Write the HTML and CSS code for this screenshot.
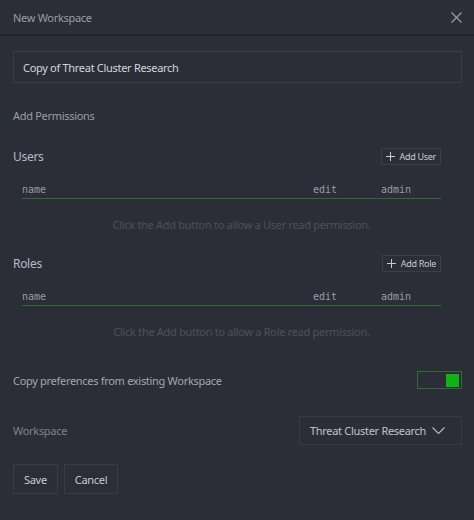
FILE: index.html
```html
<!DOCTYPE html>
<html lang="en">
<head>
  <meta charset="UTF-8" />
  <meta name="viewport" content="width=device-width, initial-scale=1.0" />
  <title>New Workspace</title>
  <link rel="stylesheet" href="styles.css">
</head>
<body>
  <div class="dialog">
    <div class="dialog-header">
      <span class="dialog-title">New Workspace</span>
      <svg class="close" width="11" height="11" viewBox="0 0 11 11">
        <path d="M0.5 0.5 L10.5 10.5 M10.5 0.5 L0.5 10.5" stroke="#9a9ca4" stroke-width="1.2" fill="none" />
      </svg>
    </div>

    <div class="dialog-body">
      <input class="name-input" type="text" value="Copy of Threat Cluster Research" />

      <p class="section-label">Add Permissions</p>

      <div class="perm-head">
        <span class="perm-title">Users</span>
        <button class="add-btn">
          <svg width="9" height="9" viewBox="0 0 9 9"><path d="M4.5 0 V9 M0 4.5 H9" stroke="#c8cad0" stroke-width="1" fill="none" /></svg>
          Add User
        </button>
      </div>
      <div class="perm-cols">
        <span class="col-name">name</span>
        <span class="col-edit">edit</span>
        <span class="col-admin">admin</span>
      </div>
      <p class="empty">Click the Add button to allow a User read permission.</p>

      <div class="perm-head roles">
        <span class="perm-title">Roles</span>
        <button class="add-btn">
          <svg width="9" height="9" viewBox="0 0 9 9"><path d="M4.5 0 V9 M0 4.5 H9" stroke="#c8cad0" stroke-width="1" fill="none" /></svg>
          Add Role
        </button>
      </div>
      <div class="perm-cols">
        <span class="col-name">name</span>
        <span class="col-edit">edit</span>
        <span class="col-admin">admin</span>
      </div>
      <p class="empty">Click the Add button to allow a Role read permission.</p>

      <div class="row copy-row">
        <span class="row-label">Copy preferences from existing Workspace</span>
        <div class="toggle"><div class="knob"></div></div>
      </div>

      <div class="row ws-row">
        <span class="row-label dim">Workspace</span>
        <div class="select">
          Threat Cluster Research
          <svg width="13" height="7" viewBox="0 0 13 7">
            <path d="M0.5 0.5 L6.5 6.5 L12.5 0.5" stroke="#b8bac0" stroke-width="1.1" fill="none" />
          </svg>
        </div>
      </div>

      <div class="actions">
        <button class="btn">Save</button>
        <button class="btn">Cancel</button>
      </div>
    </div>
  </div>
</body>
</html>
```

FILE: styles.css
```css
body {
  margin: 0;
  background: #2b2d36;
  font-family: "Noto Sans", "Open Sans", sans-serif;
  letter-spacing: -0.3px;
  color: #c4c6cc;
}
.dialog {
  width: 474px;
  height: 520px;
  background: #2c2e37;
}
.dialog-header {
  height: 34px;
  display: flex;
  align-items: center;
  justify-content: space-between;
  padding: 0 12px 0 13px;
  border-bottom: 2px solid #22242a;
}
.dialog-title {
  font-size: 11px;
  line-height: 15px;
  color: #9a9ca4;
}
.dialog-body {
  padding: 15px 12px 0 13px;
}
.name-input {
  box-sizing: border-box;
  width: 449px;
  height: 32px;
  background: transparent;
  border: 1px solid #3b3d46;
  padding: 0 9px;
  font-family: inherit;
  letter-spacing: inherit;
  font-size: 11px;
  color: #d4d6da;
  outline: none;
}
.section-label {
  margin: 25px 0 0 0;
  font-size: 11px;
  line-height: 15px;
  color: #9a9ca4;
}
.perm-head {
  display: flex;
  align-items: center;
  justify-content: space-between;
  margin-top: 25px;
  padding-right: 21px;
}
.perm-head.roles {
  margin-top: 23px;
}
.perm-title {
  font-size: 12px;
  line-height: 16px;
  color: #b8bac2;
}
.add-btn {
  height: 17px;
  display: flex;
  align-items: center;
  gap: 5px;
  padding: 0 4px;
  background: transparent;
  border: 1px solid #3c3e47;
  font-family: inherit;
  letter-spacing: inherit;
  font-size: 9px;
  color: #c8cad0;
}
.perm-cols {
  display: flex;
  margin: 19px 21px 0 9px;
  padding-bottom: 2px;
  border-bottom: 1px solid #2f6a33;
  font-family: "DejaVu Sans Mono", monospace;
  letter-spacing: 0;
  font-size: 10px;
  line-height: 12px;
  color: #9a9ca4;
}
.col-name {
  width: 291px;
}
.col-edit {
  width: 68px;
}
.empty {
  margin: 18px 0 0 0;
  padding-left: 8px;
  text-align: center;
  font-size: 11px;
  line-height: 15px;
  color: #4d505a;
}
.row {
  display: flex;
  align-items: center;
  justify-content: space-between;
}
.copy-row {
  margin-top: 32px;
}
.row-label {
  font-size: 11px;
  line-height: 15px;
  color: #a4a6ae;
}
.row-label.dim {
  color: #7f818a;
}
.toggle {
  box-sizing: border-box;
  width: 45px;
  height: 18px;
  border: 1px solid #2d6b2f;
  padding: 2px;
  display: flex;
  justify-content: flex-end;
}
.knob {
  width: 13px;
  height: 13px;
  background: #0fb315;
}
.ws-row {
  margin-top: 27px;
}
.select {
  box-sizing: border-box;
  width: 163px;
  height: 29px;
  border: 1px solid #383a43;
  display: flex;
  align-items: center;
  gap: 6px;
  padding-left: 10px;
  font-size: 11px;
  color: #c0c2c8;
}
.actions {
  display: flex;
  gap: 6px;
  margin-top: 19px;
}
.btn {
  height: 30px;
  padding: 0 10px;
  background: transparent;
  border: 1px solid #3a3c45;
  font-family: inherit;
  letter-spacing: inherit;
  font-size: 11px;
  color: #c8cad0;
}
```
